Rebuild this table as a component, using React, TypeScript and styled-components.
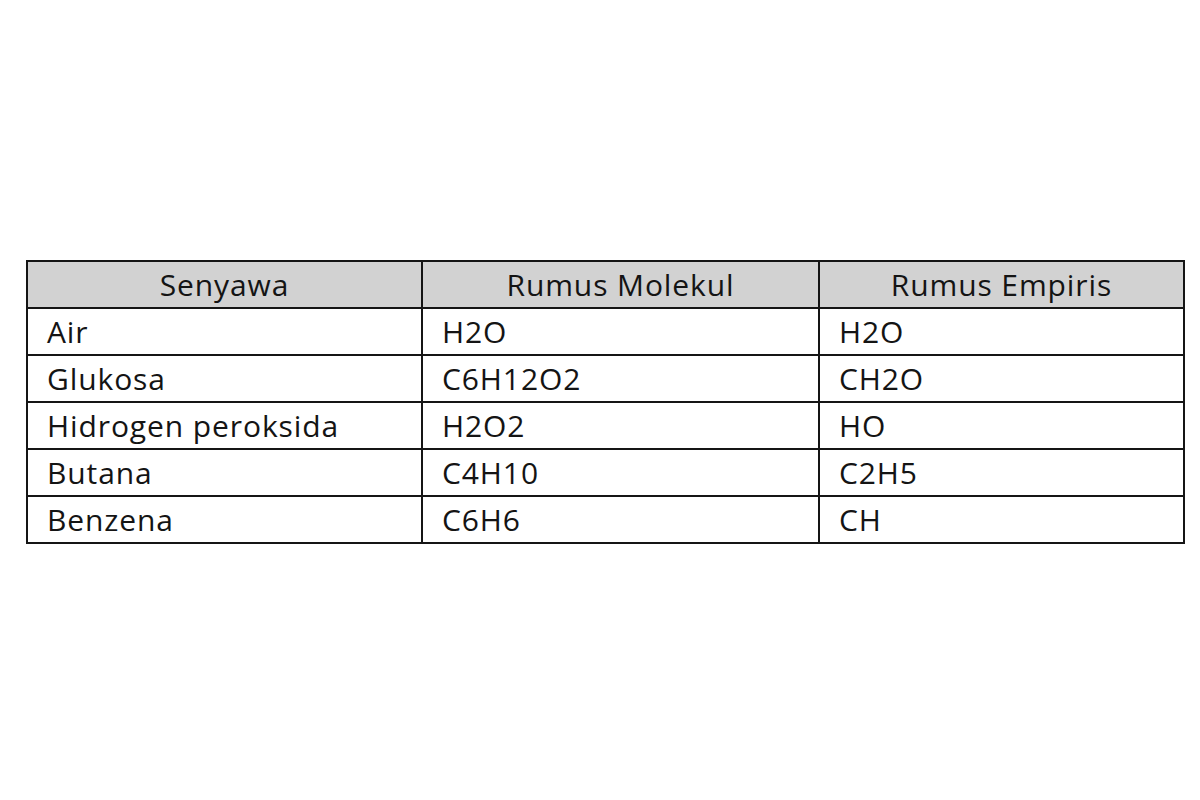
import React from "react";
import styled, { createGlobalStyle } from "styled-components";

const GlobalStyle = createGlobalStyle`
  html, body {
    margin: 0;
    padding: 0;
    background: #ffffff;
  }
  body {
    font-family: "Open Sans", "Noto Sans", Arial, sans-serif;
    color: #141414;
  }
`;

const Page = styled.div`
  width: 1200px;
  height: 800px;
  box-sizing: border-box;
  padding: 260px 17px 0 26px;
`;

const Table = styled.table`
  width: 1157px;
  border-collapse: collapse;
  table-layout: fixed;
  border: 2px solid #151515;
`;

const Col = styled.col<{ $w: number }>`
  width: ${(p) => p.$w}px;
`;

const HeadCell = styled.th`
  height: 45px;
  padding: 0;
  background: #d2d2d2;
  border: 2px solid #151515;
  font-weight: 400;
  font-size: 30px;
  letter-spacing: 0.9px;
  line-height: 1;
  text-align: center;
  vertical-align: middle;
`;

const Cell = styled.td`
  height: 45px;
  padding: 0 0 0 19px;
  border: 2px solid #151515;
  font-size: 30px;
  letter-spacing: 0.9px;
  line-height: 1;
  text-align: left;
  vertical-align: middle;
`;

const headers = ["Senyawa", "Rumus Molekul", "Rumus Empiris"];
const widths = [395, 397, 365];

const rows: [string, string, string][] = [
  ["Air", "H2O", "H2O"],
  ["Glukosa", "C6H12O2", "CH2O"],
  ["Hidrogen peroksida", "H2O2", "HO"],
  ["Butana", "C4H10", "C2H5"],
  ["Benzena", "C6H6", "CH"],
];

export default function App() {
  return (
    <>
      <GlobalStyle />
      <Page>
        <Table>
          <colgroup>
            {widths.map((w, i) => (
              <Col key={i} $w={w} />
            ))}
          </colgroup>
          <thead>
            <tr>
              {headers.map((h) => (
                <HeadCell key={h}>{h}</HeadCell>
              ))}
            </tr>
          </thead>
          <tbody>
            {rows.map((r) => (
              <tr key={r[0]}>
                {r.map((c, i) => (
                  <Cell key={i}>{c}</Cell>
                ))}
              </tr>
            ))}
          </tbody>
        </Table>
      </Page>
    </>
  );
}
